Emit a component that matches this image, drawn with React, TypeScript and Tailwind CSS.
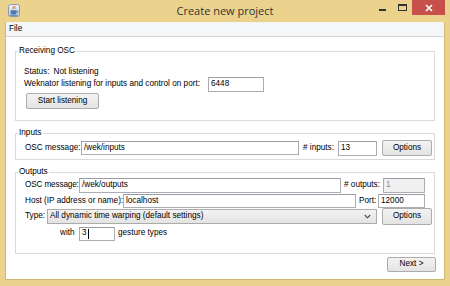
import * as React from "react";

const TextBox = ({
  className = "",
  value,
  disabled = false,
  caret = false,
}: {
  className?: string;
  value: string;
  disabled?: boolean;
  caret?: boolean;
}) => (
  <div
    className={`flex shrink-0 items-center border border-[#abadb3] border-t-[#9a9da6] px-[2px] ${
      disabled ? "bg-[#f0f0f0] text-[#8d8d8d]" : "bg-white"
    } ${className}`}
  >
    <span>{value}</span>
    {caret && <span className="ml-px h-[10px] w-px bg-black" />}
  </div>
);

const Button = ({ className = "", label }: { className?: string; label: string }) => (
  <div
    className={`flex shrink-0 items-center justify-center whitespace-nowrap rounded-[2px] border border-[#acacac] bg-linear-to-b from-[#f3f3f3] to-[#e3e3e3] ${className}`}
  >
    {label}
  </div>
);

const Label = ({ className = "", children }: { className?: string; children: React.ReactNode }) => (
  <span className={`shrink-0 whitespace-nowrap ${className}`}>{children}</span>
);

const Panel = ({
  title,
  className = "",
  children,
}: {
  title: string;
  className?: string;
  children: React.ReactNode;
}) => (
  <div className={`relative border border-[#dadada] ${className}`}>
    <span className="absolute -top-[6px] left-[2px] whitespace-nowrap bg-white px-px leading-[10px]">{title}</span>
    {children}
  </div>
);

const JavaIcon = () => (
  <svg width="12" height="13" viewBox="0 0 12 13">
    <defs>
      <linearGradient id="jv" x1="0" y1="0" x2="0" y2="1">
        <stop offset="0" stopColor="#f4f6f8" />
        <stop offset="1" stopColor="#b9c4cf" />
      </linearGradient>
    </defs>
    <rect x="0.5" y="0.5" width="11" height="12" rx="2" fill="url(#jv)" stroke="#8c99a6" />
    <path d="M5 2.2c1.2 1 -0.6 1.6 0.4 2.8M6.6 1.8c1 1 -0.4 1.7 0.6 3" stroke="#e0602a" strokeWidth="1" fill="none" />
    <path d="M2.6 6.2h6v2.4c0 1.2-1 2-2 2h-2c-1 0-2-0.8-2-2z" fill="#4a78b5" />
    <path d="M8.6 6.8h0.8c0.8 0 0.8 1.6 0 1.6h-0.8" stroke="#4a78b5" strokeWidth="0.8" fill="none" />
    <rect x="2" y="10.8" width="7.4" height="0.9" fill="#4a78b5" />
  </svg>
);

export default function App() {
  return (
    <div className="flex h-[286px] w-[450px] flex-col bg-[#ebd38d] font-['Liberation_Sans',Arial,sans-serif] text-[8.2px] text-black">
      <div className="grid h-[22px] shrink-0 grid-cols-[1fr_auto_1fr] items-start">
        <div className="pl-[8px] pt-[4px]">
          <JavaIcon />
        </div>
        <div className="font-['Open_Sans','Liberation_Sans',sans-serif] text-[11px] leading-[22px] text-[#333]">
          Create new project
        </div>
        <div className="flex items-start justify-end pr-[5px]">
          <div className="flex h-[15px] w-[20px] items-center justify-center">
            <div className="mt-[4px] h-[2px] w-[7px] bg-[#333]" />
          </div>
          <div className="flex h-[15px] w-[20px] items-center justify-center">
            <div className="h-[7px] w-[9px] border border-t-2 border-[#333]" />
          </div>
          <div className="flex h-[15px] w-[33px] items-center justify-center bg-[#c7504c]">
            <svg width="8" height="8" viewBox="0 0 8 8">
              <path d="M1 1L7 7M7 1L1 7" stroke="#fff" strokeWidth="1.6" />
            </svg>
          </div>
        </div>
      </div>

      <div className="mx-[5px] mb-[6px] flex flex-1 flex-col border-x border-b border-[#cfb874] bg-white">
        <div className="h-[15px] shrink-0 border-b border-[#d6d6d6] bg-[#f5f6f7] pl-[3px] leading-[14px]">File</div>

        <div className="flex flex-col px-[9px]">
          <Panel title="Receiving OSC" className="mt-[14px] pb-[11px] pl-[8px] pt-[15px]">
            <div className="flex h-[10px] items-center">
              <Label>Status:</Label>
              <Label className="ml-[4px]">Not listening</Label>
            </div>
            <div className="flex h-[15px] items-center">
              <Label className="w-[184px]">Weknator listening for inputs and control on port:</Label>
              <TextBox className="h-[15px] w-[56px]" value="6448" />
            </div>
            <Button className="ml-[2px] mt-px h-[16px] w-[73px]" label="Start listening" />
          </Panel>

          <Panel title="Inputs" className="mt-[12px] pb-[3px] pl-[9px] pt-[6px]">
            <div className="flex h-[16px] items-center">
              <Label className="w-[56px]">OSC message:</Label>
              <TextBox className="h-[14px] w-[218px]" value="/wek/inputs" />
              <Label className="ml-[4px] w-[35px]"># inputs:</Label>
              <TextBox className="h-[15px] w-[39px]" value="13" />
              <Button className="ml-[5px] h-[16px] w-[50px]" label="Options" />
            </div>
          </Panel>

          <Panel title="Outputs" className="mt-[12px] pb-[12px] pl-[9px] pt-[5px]">
            <div className="flex h-[15px] items-center">
              <Label className="w-[54px] tracking-[-0.15px]">OSC message:</Label>
              <TextBox className="h-[15px] w-[262px]" value="/wek/outputs" />
              <Label className="ml-[3px] w-[39px]"># outputs:</Label>
              <TextBox className="h-[15px] w-[42px]" value="1" disabled />
            </div>
            <div className="mt-px flex h-[14px] items-center">
              <Label className="w-[98px]">Host (IP address or name):</Label>
              <TextBox className="h-[14px] w-[233px]" value="localhost" />
              <Label className="ml-[3px] w-[19px]">Port:</Label>
              <TextBox className="h-[14px] w-[47px]" value="12000" />
            </div>
            <div className="flex h-[17px] items-center">
              <Label className="w-[22px]">Type:</Label>
              <div className="flex h-[15px] w-[330px] shrink-0 items-center justify-between border border-[#acacac] bg-linear-to-b from-[#f3f3f3] to-[#e3e3e3] pl-[2px] pr-[5px]">
                <span className="whitespace-nowrap">All dynamic time warping (default settings)</span>
                <svg width="7" height="5" viewBox="0 0 7 5">
                  <path d="M0.8 1L3.5 3.8L6.2 1" stroke="#444" strokeWidth="1.1" fill="none" />
                </svg>
              </div>
              <Button className="ml-[5px] h-[17px] w-[50px]" label="Options" />
            </div>
            <div className="mt-px flex h-[15px] items-center pl-[35px]">
              <Label className="w-[19px]">with</Label>
              <TextBox className="h-[14px] w-[36px]" value="3" caret />
              <Label className="ml-[3px]">gesture types</Label>
            </div>
          </Panel>

          <div className="mt-[3px] flex justify-end">
            <Button className="-mr-px h-[15px] w-[49px]" label="Next >" />
          </div>
        </div>
      </div>
    </div>
  );
}
